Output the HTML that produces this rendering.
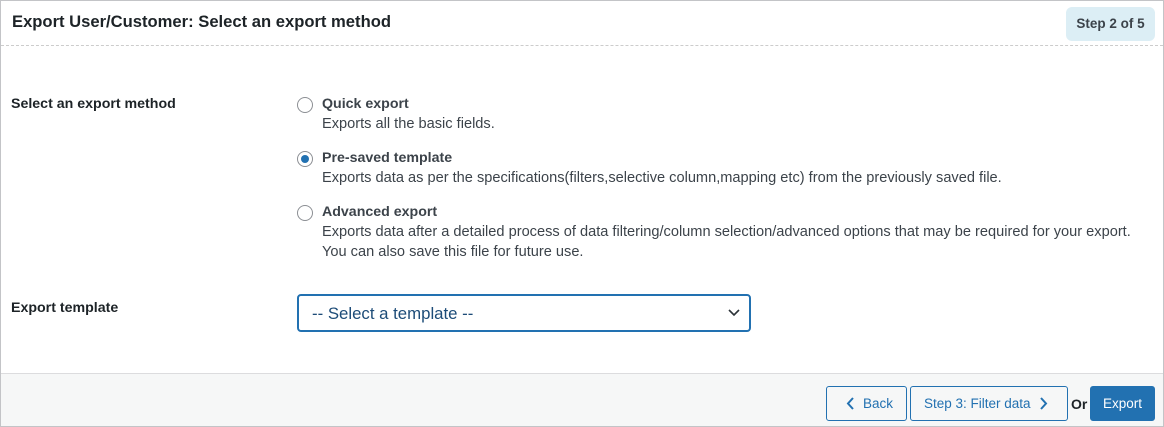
<!DOCTYPE html><html><head><style>
*{box-sizing:border-box;margin:0;padding:0}
body{width:1164px;height:427px;background:#fff;font-family:"Liberation Sans",Arial,sans-serif;color:#3c434a;font-size:13px;position:relative;overflow:hidden}
.frame{position:absolute;left:0;top:0;width:1164px;height:427px;border:1px solid #c3c4c7}
.hdr{position:absolute;left:1px;top:1px;width:1162px;height:45px;border-bottom:1px dashed #ccc}
.t{position:absolute;left:11px;top:11px;font-size:16.6px;font-weight:bold;color:#1d2327}
.step{position:absolute;left:1065px;top:6px;width:89px;height:34px;background:#dceef5;border-radius:6px;font-weight:bold;font-size:13.5px;color:#3c434a;text-align:center;line-height:34px}
.lbl{position:absolute;left:11px;font-weight:bold;color:#1d2327;font-size:14.2px}
.r{position:absolute;left:297px;width:16px;height:16px;border:1px solid #8c8f94;border-radius:50%;background:#fff}
.r.on::after{content:"";position:absolute;left:3px;top:3px;width:8px;height:8px;border-radius:50%;background:#2271b1}
.ot{position:absolute;left:322px;font-weight:bold;color:#3c434a;font-size:14.2px}
.od{position:absolute;left:322px;color:#3c434a;line-height:20px;font-size:14.6px;white-space:nowrap}
.sel{position:absolute;left:297px;top:294px;width:454px;height:38px;border:2px solid #2271b1;border-radius:4px;font-size:16.8px;padding:8px 13px;color:#1d4c78}
.ftr{position:absolute;left:1px;top:373px;width:1162px;height:53px;background:#f6f7f7;border-top:1px solid #dcdcde}
.b{position:absolute;top:12px;height:35px;border:1px solid #2271b1;border-radius:3px;color:#2271b1;background:#f6f7f7;font-size:13.5px;line-height:33px}
</style></head><body>
<div class="frame"></div>
<div class="hdr"><div class="t">Export User/Customer: Select an export method</div><div class="step">Step 2 of 5</div></div>
<div class="lbl" style="top:96px">Select an export method</div>
<div class="r" style="top:97px"></div><div class="ot" style="top:96px">Quick export</div><div class="od" style="top:114px">Exports all the basic fields.</div>
<div class="r on" style="top:151px"></div><div class="ot" style="top:150px">Pre-saved template</div><div class="od" style="top:168px">Exports data as per the specifications(filters,selective column,mapping etc) from the previously saved file.</div>
<div class="r" style="top:205px"></div><div class="ot" style="top:204px">Advanced export</div><div class="od" style="top:222px">Exports data after a detailed process of data filtering/column selection/advanced options that may be required for your export.<br>You can also save this file for future use.</div>
<div class="lbl" style="top:300px">Export template</div>
<div class="sel">-- Select a template --<svg style="position:absolute;right:9px;top:13px" width="12" height="8" viewBox="0 0 12 8"><path d="M1 1l5 5 5-5" fill="none" stroke="#2c3338" stroke-width="1.6"/></svg></div>
<div class="ftr">
<div class="b" style="left:825px;width:81px"><svg style="position:absolute;left:19px;top:10px" width="8" height="13" viewBox="0 0 8 13"><path d="M7 1L2 6.5 7 12" fill="none" stroke="#2271b1" stroke-width="2"/></svg><span style="position:absolute;left:36px">Back</span></div>
<div class="b" style="left:909px;width:158px"><span style="position:absolute;left:13px">Step 3: Filter data</span><svg style="position:absolute;left:129px;top:10px" width="8" height="13" viewBox="0 0 8 13"><path d="M1 1l5 5.5L1 12" fill="none" stroke="#2271b1" stroke-width="2"/></svg></div>
<div style="position:absolute;left:1070px;top:22px;font-weight:bold;color:#1d2327;font-size:14px">Or</div>
<div class="b" style="left:1089px;width:65px;background:#2271b1;color:#fff;text-align:center">Export</div>
</div>
</body></html>
